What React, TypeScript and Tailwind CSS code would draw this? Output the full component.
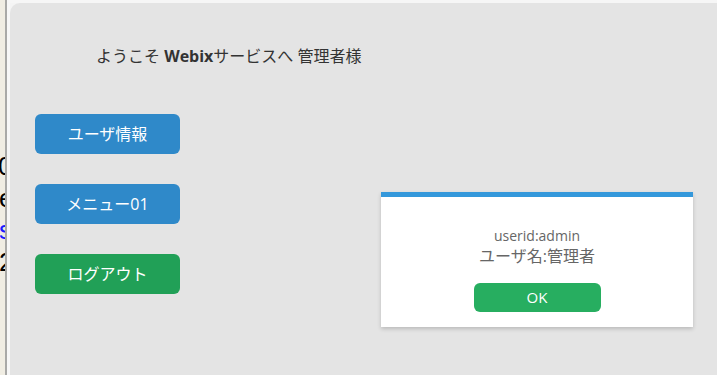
export default function App() {
  const font = { fontFamily: '"Open Sans", "Noto Sans CJK JP", sans-serif' };

  return (
    <div className="relative flex h-[375px] w-[717px] overflow-hidden bg-[#f4f4f4]" style={font}>
      {/* page behind the panel, mostly hidden */}
      <div className="w-[5px] overflow-hidden bg-[#f0ede3] pt-[150px] text-[26px] leading-[32px] text-black" style={{ fontFamily: '"Liberation Sans", sans-serif' }}>
        <div className="-ml-[2px]">0</div>
        <div className="-ml-[1px]">e</div>
        <div className="-ml-[1px] text-[#1a1aff]">s</div>
        <div className="-ml-[1px]">2</div>
      </div>
      <div className="w-[2px] bg-[#a9a9a7]" />
      <div className="w-[3px] bg-[#f7f7f7]" />

      <div className="flex flex-1 flex-col">
        <div className="h-[3px] bg-[#f6f6f6]" />
        <div className="flex-1 rounded-tl-[10px] bg-[#e4e4e4] pl-[25px] pt-[42px]">
          <div className="pl-[61px] text-[16px] leading-[22px] text-[#333]">
            ようこそ <span className="font-bold">Webix</span>サービスへ 管理者様
          </div>

          <div className="mt-[47px] flex flex-col gap-[30px]">
            <button className="h-[40px] w-[145px] rounded-[6px] bg-[#2f89c9] text-[16px] text-white">ユーザ情報</button>
            <button className="h-[40px] w-[145px] rounded-[6px] bg-[#2f89c9] text-[16px] text-white">メニュー01</button>
            <button className="h-[40px] w-[145px] rounded-[6px] bg-[#21a057] text-[16px] text-white">ログアウト</button>
          </div>
        </div>
      </div>

      {/* message box */}
      <div className="absolute left-[381px] top-[192px] w-[312px] border-t-[5px] border-[#3498db] bg-white shadow-[0_2px_4px_rgba(0,0,0,0.18)]">
        <div className="flex flex-col items-center pb-[15px] pt-[29px]">
          <div className="text-[14px] leading-[19px] text-[#666]">userid:admin</div>
          <div className="text-[16px] leading-[22px] text-[#666]">ユーザ名:管理者</div>
          <button className="mt-[16px] h-[29px] w-[127px] rounded-[6px] bg-[#27ae60] text-[15px] text-white">OK</button>
        </div>
      </div>
    </div>
  );
}
